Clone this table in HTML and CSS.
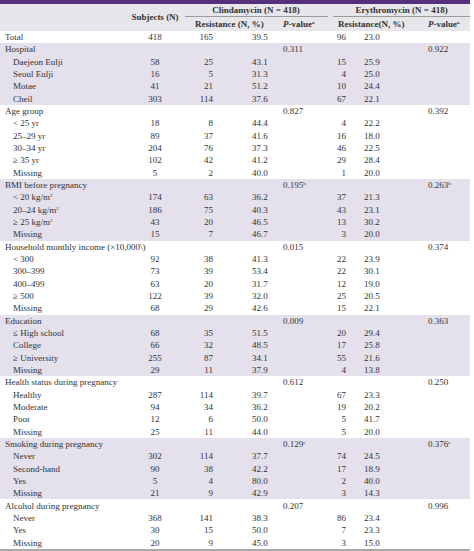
FILE: index.html
```html
<!DOCTYPE html>
<html>
<head>
<meta charset="utf-8">
<link rel="stylesheet" href="styles.css">
</head>
<body>
<div class="wrap">
<table class="tbl">
<colgroup>
<col class="c-lab"><col class="c-s"><col class="c-n"><col class="c-p"><col class="c-pv"><col class="c-n2"><col class="c-p2"><col class="c-pv2">
</colgroup>
<thead>
<tr class="h1">
<th rowspan="2"></th>
<th rowspan="2" class="hs">Subjects (N)</th>
<th colspan="3" class="hg"><div class="gl gl1">Clindamycin (N = 418)</div></th>
<th colspan="3" class="hg"><div class="gl gl2">Erythromycin (N = 418)</div></th>
</tr>
<tr class="h2">
<th colspan="2" class="hr1">Resistance (N, %)</th>
<th class="pv"><i>P</i>-value<sup>a</sup></th>
<th colspan="2" class="hr2">Resistance(N, %)</th>
<th class="pv2"><i>P</i>-value<sup>a</sup></th>
</tr>
</thead>
<tbody>
<tr><td class="lab">Total</td><td class="s">418</td><td class="n">165</td><td class="p">39.5</td><td class="pv"></td><td class="n2">96</td><td class="p2">23.0</td><td class="pv2"></td></tr>

<tr class="g"><td class="lab">Hospital</td><td class="s"></td><td class="n"></td><td class="p"></td><td class="pv">0.311</td><td class="n2"></td><td class="p2"></td><td class="pv2">0.922</td></tr>
<tr class="g"><td class="sub">Daejeon Eulji</td><td class="s">58</td><td class="n">25</td><td class="p">43.1</td><td class="pv"></td><td class="n2">15</td><td class="p2">25.9</td><td class="pv2"></td></tr>
<tr class="g"><td class="sub">Seoul Eulji</td><td class="s">16</td><td class="n">5</td><td class="p">31.3</td><td class="pv"></td><td class="n2">4</td><td class="p2">25.0</td><td class="pv2"></td></tr>
<tr class="g"><td class="sub">Motae</td><td class="s">41</td><td class="n">21</td><td class="p">51.2</td><td class="pv"></td><td class="n2">10</td><td class="p2">24.4</td><td class="pv2"></td></tr>
<tr class="g"><td class="sub">Cheil</td><td class="s">303</td><td class="n">114</td><td class="p">37.6</td><td class="pv"></td><td class="n2">67</td><td class="p2">22.1</td><td class="pv2"></td></tr>

<tr><td class="lab">Age group</td><td class="s"></td><td class="n"></td><td class="p"></td><td class="pv">0.827</td><td class="n2"></td><td class="p2"></td><td class="pv2">0.392</td></tr>
<tr><td class="sub">&lt; 25 yr</td><td class="s">18</td><td class="n">8</td><td class="p">44.4</td><td class="pv"></td><td class="n2">4</td><td class="p2">22.2</td><td class="pv2"></td></tr>
<tr><td class="sub">25–29 yr</td><td class="s">89</td><td class="n">37</td><td class="p">41.6</td><td class="pv"></td><td class="n2">16</td><td class="p2">18.0</td><td class="pv2"></td></tr>
<tr><td class="sub">30–34 yr</td><td class="s">204</td><td class="n">76</td><td class="p">37.3</td><td class="pv"></td><td class="n2">46</td><td class="p2">22.5</td><td class="pv2"></td></tr>
<tr><td class="sub">≥ 35 yr</td><td class="s">102</td><td class="n">42</td><td class="p">41.2</td><td class="pv"></td><td class="n2">29</td><td class="p2">28.4</td><td class="pv2"></td></tr>
<tr><td class="sub">Missing</td><td class="s">5</td><td class="n">2</td><td class="p">40.0</td><td class="pv"></td><td class="n2">1</td><td class="p2">20.0</td><td class="pv2"></td></tr>

<tr class="g"><td class="lab">BMI before pregnancy</td><td class="s"></td><td class="n"></td><td class="p"></td><td class="pv">0.195<sup>b</sup></td><td class="n2"></td><td class="p2"></td><td class="pv2">0.263<sup>b</sup></td></tr>
<tr class="g"><td class="sub">&lt; 20 kg/m<sup>2</sup></td><td class="s">174</td><td class="n">63</td><td class="p">36.2</td><td class="pv"></td><td class="n2">37</td><td class="p2">21.3</td><td class="pv2"></td></tr>
<tr class="g"><td class="sub">20–24 kg/m<sup>2</sup></td><td class="s">186</td><td class="n">75</td><td class="p">40.3</td><td class="pv"></td><td class="n2">43</td><td class="p2">23.1</td><td class="pv2"></td></tr>
<tr class="g"><td class="sub">≥ 25 kg/m<sup>2</sup></td><td class="s">43</td><td class="n">20</td><td class="p">46.5</td><td class="pv"></td><td class="n2">13</td><td class="p2">30.2</td><td class="pv2"></td></tr>
<tr class="g"><td class="sub">Missing</td><td class="s">15</td><td class="n">7</td><td class="p">46.7</td><td class="pv"></td><td class="n2">3</td><td class="p2">20.0</td><td class="pv2"></td></tr>

<tr><td class="lab">Household monthly income (×10,000\)</td><td class="s"></td><td class="n"></td><td class="p"></td><td class="pv">0.015</td><td class="n2"></td><td class="p2"></td><td class="pv2">0.374</td></tr>
<tr><td class="sub">&lt; 300</td><td class="s">92</td><td class="n">38</td><td class="p">41.3</td><td class="pv"></td><td class="n2">22</td><td class="p2">23.9</td><td class="pv2"></td></tr>
<tr><td class="sub">300–399</td><td class="s">73</td><td class="n">39</td><td class="p">53.4</td><td class="pv"></td><td class="n2">22</td><td class="p2">30.1</td><td class="pv2"></td></tr>
<tr><td class="sub">400–499</td><td class="s">63</td><td class="n">20</td><td class="p">31.7</td><td class="pv"></td><td class="n2">12</td><td class="p2">19.0</td><td class="pv2"></td></tr>
<tr><td class="sub">≥ 500</td><td class="s">122</td><td class="n">39</td><td class="p">32.0</td><td class="pv"></td><td class="n2">25</td><td class="p2">20.5</td><td class="pv2"></td></tr>
<tr><td class="sub">Missing</td><td class="s">68</td><td class="n">29</td><td class="p">42.6</td><td class="pv"></td><td class="n2">15</td><td class="p2">22.1</td><td class="pv2"></td></tr>

<tr class="g"><td class="lab">Education</td><td class="s"></td><td class="n"></td><td class="p"></td><td class="pv">0.009</td><td class="n2"></td><td class="p2"></td><td class="pv2">0.363</td></tr>
<tr class="g"><td class="sub">≤ High school</td><td class="s">68</td><td class="n">35</td><td class="p">51.5</td><td class="pv"></td><td class="n2">20</td><td class="p2">29.4</td><td class="pv2"></td></tr>
<tr class="g"><td class="sub">College</td><td class="s">66</td><td class="n">32</td><td class="p">48.5</td><td class="pv"></td><td class="n2">17</td><td class="p2">25.8</td><td class="pv2"></td></tr>
<tr class="g"><td class="sub">≥ University</td><td class="s">255</td><td class="n">87</td><td class="p">34.1</td><td class="pv"></td><td class="n2">55</td><td class="p2">21.6</td><td class="pv2"></td></tr>
<tr class="g"><td class="sub">Missing</td><td class="s">29</td><td class="n">11</td><td class="p">37.9</td><td class="pv"></td><td class="n2">4</td><td class="p2">13.8</td><td class="pv2"></td></tr>

<tr><td class="lab">Health status during pregnancy</td><td class="s"></td><td class="n"></td><td class="p"></td><td class="pv">0.612</td><td class="n2"></td><td class="p2"></td><td class="pv2">0.250</td></tr>
<tr><td class="sub">Healthy</td><td class="s">287</td><td class="n">114</td><td class="p">39.7</td><td class="pv"></td><td class="n2">67</td><td class="p2">23.3</td><td class="pv2"></td></tr>
<tr><td class="sub">Moderate</td><td class="s">94</td><td class="n">34</td><td class="p">36.2</td><td class="pv"></td><td class="n2">19</td><td class="p2">20.2</td><td class="pv2"></td></tr>
<tr><td class="sub">Poor</td><td class="s">12</td><td class="n">6</td><td class="p">50.0</td><td class="pv"></td><td class="n2">5</td><td class="p2">41.7</td><td class="pv2"></td></tr>
<tr><td class="sub">Missing</td><td class="s">25</td><td class="n">11</td><td class="p">44.0</td><td class="pv"></td><td class="n2">5</td><td class="p2">20.0</td><td class="pv2"></td></tr>

<tr class="g"><td class="lab">Smoking during pregnancy</td><td class="s"></td><td class="n"></td><td class="p"></td><td class="pv">0.129<sup>c</sup></td><td class="n2"></td><td class="p2"></td><td class="pv2">0.376<sup>c</sup></td></tr>
<tr class="g"><td class="sub">Never</td><td class="s">302</td><td class="n">114</td><td class="p">37.7</td><td class="pv"></td><td class="n2">74</td><td class="p2">24.5</td><td class="pv2"></td></tr>
<tr class="g"><td class="sub">Second-hand</td><td class="s">90</td><td class="n">38</td><td class="p">42.2</td><td class="pv"></td><td class="n2">17</td><td class="p2">18.9</td><td class="pv2"></td></tr>
<tr class="g"><td class="sub">Yes</td><td class="s">5</td><td class="n">4</td><td class="p">80.0</td><td class="pv"></td><td class="n2">2</td><td class="p2">40.0</td><td class="pv2"></td></tr>
<tr class="g"><td class="sub">Missing</td><td class="s">21</td><td class="n">9</td><td class="p">42.9</td><td class="pv"></td><td class="n2">3</td><td class="p2">14.3</td><td class="pv2"></td></tr>

<tr><td class="lab">Alcohol during pregnancy</td><td class="s"></td><td class="n"></td><td class="p"></td><td class="pv">0.207</td><td class="n2"></td><td class="p2"></td><td class="pv2">0.996</td></tr>
<tr><td class="sub">Never</td><td class="s">368</td><td class="n">141</td><td class="p">38.3</td><td class="pv"></td><td class="n2">86</td><td class="p2">23.4</td><td class="pv2"></td></tr>
<tr><td class="sub">Yes</td><td class="s">30</td><td class="n">15</td><td class="p">50.0</td><td class="pv"></td><td class="n2">7</td><td class="p2">23.3</td><td class="pv2"></td></tr>
<tr><td class="sub">Missing</td><td class="s">20</td><td class="n">9</td><td class="p">45.0</td><td class="pv"></td><td class="n2">3</td><td class="p2">15.0</td><td class="pv2"></td></tr>
</tbody>
</table>
</div>
</body>
</html>
```

FILE: styles.css
```css
html, body {
  margin: 0;
  padding: 0;
  background: #ffffff;
}

.wrap {
  width: 470px;
  border-top: 4px solid #56307a;
  border-bottom: 2px solid #a9a9a9;
}

.tbl {
  width: 470px;
  table-layout: fixed;
  border-collapse: collapse;
  border-spacing: 0;
  font-family: "Liberation Serif", "Times New Roman", serif;
  font-size: 9px;
  color: #333333;
}

.c-lab { width: 130px; }
.c-s { width: 55px; }
.c-n { width: 33px; }
.c-p { width: 52px; }
.c-pv { width: 61px; }
.c-n2 { width: 19px; }
.c-p2 { width: 55px; }
.c-pv2 { width: 65px; }

.tbl th, .tbl td {
  padding: 0;
  white-space: nowrap;
  overflow: visible;
}

.tbl thead th {
  background: #e7e6ea;
  font-weight: bold;
  color: #333333;
}

.h1 { height: 13px; }
.h2 { height: 14px; }

.h1 th { vertical-align: middle; line-height: 13px; }
.h2 th { vertical-align: middle; line-height: 14px; text-align: left; }

.hs {
  text-align: center;
  padding-right: 5px !important;
}

.hg { text-align: center; vertical-align: bottom; }

.gl {
  border-bottom: 1px solid #9c9c9c;
  line-height: 12px;
}
.gl1 { margin-right: 3px; padding-right: 1px; }
.gl2 { margin-left: 2px; }

.hr1 { padding-left: 10px !important; }
.hr2 { padding-left: 7px !important; }

.tbl tbody tr { height: 12.34px; }
.tbl tbody td { line-height: 12px; vertical-align: middle; }

.tbl tbody tr.g td { background: #e4e0ec; }

.lab { padding-left: 5px !important; }
.sub { padding-left: 13px !important; }

.s { text-align: center; padding-right: 5px !important; }
.n { text-align: right; padding-right: 5px !important; }
.p { text-align: left; padding-left: 34px !important; }
.pv { text-align: left; padding-left: 13px !important; }
.n2 { text-align: right; padding-right: 4px !important; }
.p2 { text-align: left; padding-left: 14px !important; }
.pv2 { text-align: left; padding-left: 23px !important; }

sup {
  font-size: 5px;
  line-height: 0;
  vertical-align: 3px;
}
```
